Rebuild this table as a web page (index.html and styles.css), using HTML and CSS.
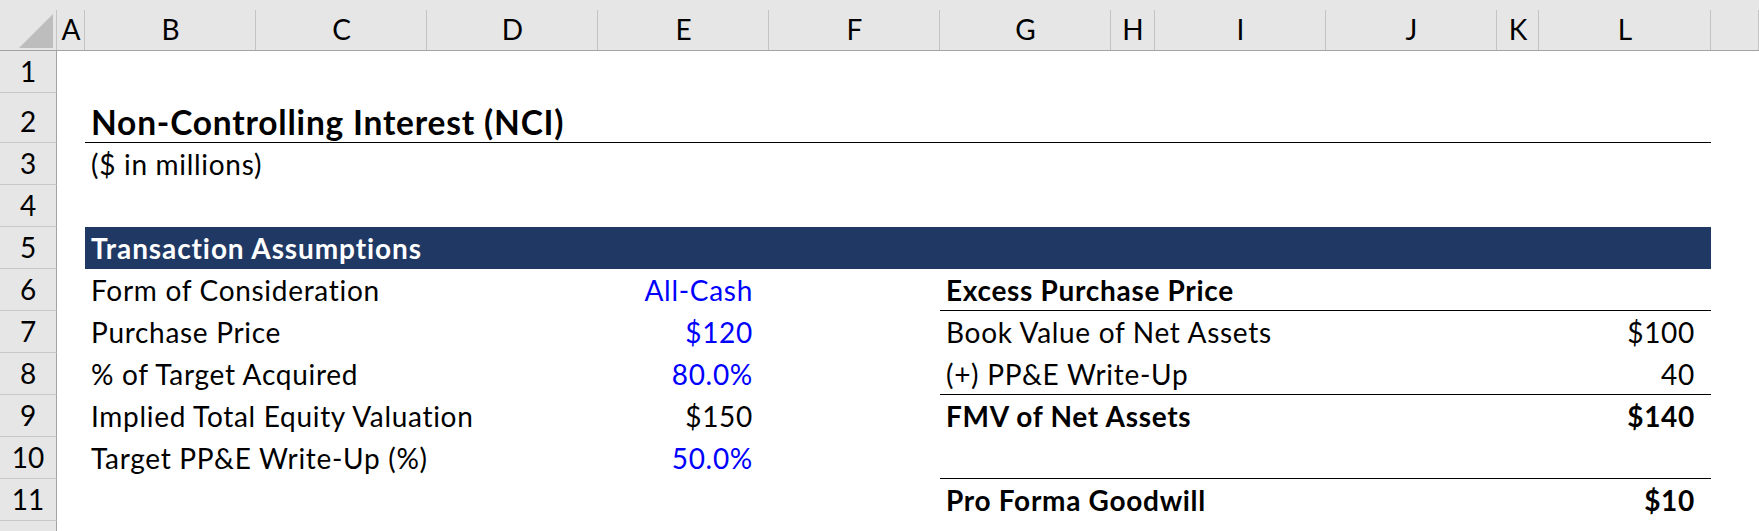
FILE: index.html
```html
<!DOCTYPE html>
<html lang="en">
<head>
<meta charset="utf-8">
<title>Non-Controlling Interest (NCI)</title>
<link rel="stylesheet" href="styles.css">
</head>
<body>
<div class="sheet">
  <div class="hdr">
    <div class="ch corner"><svg class="tri" width="57" height="50" viewBox="0 0 57 50"><polygon points="19,48 53,48 53,14" fill="#bdbdbd"/></svg></div>
    <div class="ch">A</div>
    <div class="ch">B</div>
    <div class="ch">C</div>
    <div class="ch">D</div>
    <div class="ch">E</div>
    <div class="ch">F</div>
    <div class="ch">G</div>
    <div class="ch">H</div>
    <div class="ch">I</div>
    <div class="ch">J</div>
    <div class="ch">K</div>
    <div class="ch">L</div>
    <div class="ch"></div>
  </div>

  <div class="row"><div class="rh">1</div></div>

  <div class="row tall">
    <div class="rh">2</div>
    <div class="c title">Non-Controlling Interest (NCI)</div>
  </div>

  <div class="row">
    <div class="rh">3</div>
    <div class="c left-b">($ in millions)</div>
  </div>

  <div class="row"><div class="rh">4</div></div>

  <div class="row">
    <div class="rh">5</div>
    <div class="c band">Transaction Assumptions</div>
  </div>

  <div class="row">
    <div class="rh">6</div>
    <div class="c left-b">Form of Consideration</div>
    <div class="c num col-e blue">All-Cash</div>
    <div class="c left-g-full bold under">Excess Purchase Price</div>
  </div>

  <div class="row">
    <div class="rh">7</div>
    <div class="c left-b">Purchase Price</div>
    <div class="c num col-e blue">$120</div>
    <div class="c left-g">Book Value of Net Assets</div>
    <div class="c num col-l">$100</div>
  </div>

  <div class="row">
    <div class="rh">8</div>
    <div class="c left-b">% of Target Acquired</div>
    <div class="c num col-e blue">80.0%</div>
    <div class="c left-g under">(+) PP&amp;E Write-Up</div>
    <div class="c num col-l under">40</div>
  </div>

  <div class="row">
    <div class="rh">9</div>
    <div class="c left-b">Implied Total Equity Valuation</div>
    <div class="c num col-e">$150</div>
    <div class="c left-g bold">FMV of Net Assets</div>
    <div class="c num col-l bold">$140</div>
  </div>

  <div class="row">
    <div class="rh">10</div>
    <div class="c left-b">Target PP&amp;E Write-Up (%)</div>
    <div class="c num col-e blue">50.0%</div>
    <div class="c left-g-full under"></div>
  </div>

  <div class="row">
    <div class="rh">11</div>
    <div class="c left-g bold">Pro Forma Goodwill</div>
    <div class="c num col-l bold">$10</div>
  </div>

  <div class="row"><div class="rh"></div></div>
</div>
</body>
</html>
```

FILE: styles.css
```css
:root {
  --cols: 57px 28px repeat(6, 171px) 44px 171px 171px 42px 172px 1fr;
}

html, body {
  margin: 0;
  padding: 0;
  height: 100%;
  overflow: hidden;
  background: #ffffff;
}

body {
  font-family: Lato, "Liberation Sans", sans-serif;
  font-size: 28px;
  letter-spacing: 0.7px;
  color: #000000;
}

.sheet {
  display: flex;
  flex-direction: column;
}

.hdr,
.row {
  display: grid;
  grid-template-columns: var(--cols);
}

.hdr {
  height: 51px;
  box-sizing: border-box;
  border-bottom: 1px solid #a3a3a3;
  background: #e6e6e6;
}

.row {
  height: 42px;
  flex: none;
}

.row.tall {
  height: 50px;
}

.row > * {
  grid-row: 1;
}

.ch {
  display: flex;
  align-items: flex-end;
  justify-content: center;
  padding-bottom: 3px;
  line-height: 1.2;
  letter-spacing: 0;
  background: linear-gradient(#c4c4c4, #c4c4c4) right bottom / 1px 40px no-repeat;
}

.corner {
  padding: 0;
}

.tri {
  display: block;
}

.rh {
  grid-column: 1;
  display: flex;
  align-items: flex-end;
  justify-content: center;
  box-sizing: border-box;
  padding-bottom: 3px;
  line-height: 1.2;
  letter-spacing: 0;
  background: #e6e6e6;
  border-right: 1px solid #a3a3a3;
  border-bottom: 1px solid #c8c8c8;
}

.c {
  display: flex;
  align-items: flex-end;
  box-sizing: border-box;
  padding: 0 6px 3px 6px;
  line-height: 1.2;
  white-space: nowrap;
  min-width: 0;
}

.left-b {
  grid-column: 3 / 6;
}

.left-g {
  grid-column: 8 / 13;
}

.left-g-full {
  grid-column: 8 / 14;
}

.col-e {
  grid-column: 6;
}

.col-l {
  grid-column: 13;
}

.num {
  justify-content: flex-end;
  padding-right: 16px;
}

.blue {
  color: #0000ff;
}

.bold {
  font-weight: 700;
}

.under {
  border-bottom: 1px solid #000000;
  padding-bottom: 2px;
}

.title {
  grid-column: 3 / 14;
  font-weight: 700;
  font-size: 33.5px;
  letter-spacing: 0.8px;
  border-bottom: 1px solid #000000;
  padding-bottom: 0;
}

.band {
  grid-column: 3 / 14;
  background: #203864;
  color: #ffffff;
  font-weight: 700;
  letter-spacing: 0.9px;
}
```
